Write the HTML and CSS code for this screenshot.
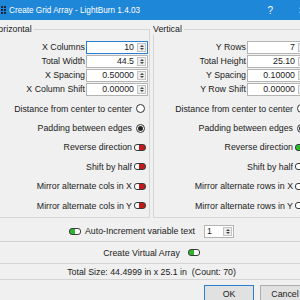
FILE: index.html
```html
<!DOCTYPE html>
<html>
<head>
    <meta charset="UTF-8">
    <title>Create Grid Array - LightBurn 1.4.03</title>
    <link rel="stylesheet" href="styles.css">
</head>
<body>
    <div class="titlebar">
        <svg class="app-icon" width="8" height="8" viewBox="0 0 8 8">
            <rect x="0" y="0" width="2" height="2"/><rect x="3" y="0" width="2" height="2"/><rect x="6" y="0" width="2" height="2"/>
            <rect x="0" y="3" width="2" height="2"/><rect x="3" y="3" width="2" height="2"/><rect x="6" y="3" width="2" height="2"/>
            <rect x="0" y="6" width="2" height="2"/><rect x="3" y="6" width="2" height="2"/><rect x="6" y="6" width="2" height="2"/>
        </svg>
        <span class="title">Create Grid Array - LightBurn 1.4.03</span>
        <span class="tb-btn help">?</span>
        <span class="tb-btn close">✕</span>
    </div>

    <div class="dialog">
        <div class="groups">
            <!-- horizontal settings -->
            <fieldset class="group">
                <legend>Horizontal</legend>
                <div class="field"><label>X Columns</label><div class="spin focused"><span class="val">10</span><span class="arrows"></span></div></div>
                <div class="field"><label>Total Width</label><div class="spin"><span class="val">44.5</span><span class="arrows"></span></div></div>
                <div class="field"><label>X Spacing</label><div class="spin"><span class="val">0.50000</span><span class="arrows"></span></div></div>
                <div class="field"><label>X Column Shift</label><div class="spin"><span class="val">0.00000</span><span class="arrows"></span></div></div>
                <div class="options">
                    <div class="opt"><span>Distance from center to center</span><span class="radio"></span></div>
                    <div class="opt"><span>Padding between edges</span><span class="radio on"></span></div>
                    <div class="opt"><span>Reverse direction</span><span class="toggle"></span></div>
                    <div class="opt"><span>Shift by half</span><span class="toggle"></span></div>
                    <div class="opt"><span>Mirror alternate cols in X</span><span class="toggle"></span></div>
                    <div class="opt"><span>Mirror alternate cols in Y</span><span class="toggle"></span></div>
                </div>
            </fieldset>
            <!-- vertical settings -->
            <fieldset class="group">
                <legend>Vertical</legend>
                <div class="field"><label>Y Rows</label><div class="spin"><span class="val">7</span><span class="arrows"></span></div></div>
                <div class="field"><label>Total Height</label><div class="spin"><span class="val">25.10</span><span class="arrows"></span></div></div>
                <div class="field"><label>Y Spacing</label><div class="spin"><span class="val">0.10000</span><span class="arrows"></span></div></div>
                <div class="field"><label>Y Row Shift</label><div class="spin"><span class="val">0.00000</span><span class="arrows"></span></div></div>
                <div class="options">
                    <div class="opt"><span>Distance from center to center</span><span class="radio"></span></div>
                    <div class="opt"><span>Padding between edges</span><span class="radio on"></span></div>
                    <div class="opt"><span>Reverse direction</span><span class="toggle on"></span></div>
                    <div class="opt"><span>Shift by half</span><span class="toggle"></span></div>
                    <div class="opt"><span>Mirror alternate rows in X</span><span class="toggle"></span></div>
                    <div class="opt"><span>Mirror alternate rows in Y</span><span class="toggle"></span></div>
                </div>
            </fieldset>
        </div>

        <div class="row auto-row">
            <span class="toggle on"></span>
            <span>Auto-Increment variable text</span>
            <div class="spin small"><span class="val left">1</span><span class="arrows"></span></div>
        </div>
        <div class="row virtual-row">
            <span>Create Virtual Array</span>
            <span class="toggle on"></span>
        </div>
        <div class="row total-row">Total Size: 44.4999 in x 25.1 in&nbsp; (Count: 70)</div>
        <div class="buttons">
            <button class="btn default">OK</button>
            <button class="btn">Cancel</button>
        </div>
    </div>
</body>
</html>
```

FILE: styles.css
```css
* {
    box-sizing: border-box;
}
body {
    margin: 0;
    width: 300px;
    height: 300px;
    overflow: hidden;
    background-color: #f0f0f0;
    color: #1a1a1a;
    font-family: "Liberation Sans", Arial, sans-serif;
    font-size: 8.8px;
}

/* window title */
.titlebar {
    height: 20px;
    background-color: #1f87d8;
    color: #ffffff;
    display: flex;
    align-items: center;
    font-size: 8.2px;
}
.app-icon {
    margin-left: -2px;
    fill: #16243f;
}
.title {
    margin-left: 3px;
}
.tb-btn {
    font-size: 10px;
}
.help {
    margin-left: auto;
    margin-right: 25px;
}
.close {
    margin-right: -6px;
}

/* dialog body */
.dialog {
    margin-left: -10px;
    width: 323px;
}
.groups {
    display: flex;
    gap: 3px;
    padding-top: 4px;
    padding-left: 2px;
}
.group {
    width: 158px;
    margin: 0;
    padding: 6px 1px 2px 0;
    border: 1px solid #d6d6d6;
    min-width: 0;
}
.group legend {
    padding: 0 2px 0 0;
    margin-left: -1px;
    line-height: 10px;
}
.field {
    display: flex;
    align-items: center;
    height: 14px;
}
.field label {
    flex: 1;
    text-align: right;
    padding-right: 1px;
}

/* spin boxes */
.spin {
    width: 62px;
    height: 13px;
    display: flex;
    align-items: stretch;
    background-color: #ffffff;
    border: 1px solid #b4b4b4;
}
.spin.focused {
    border-color: #2a7fd0;
}
.spin .val {
    flex: 1;
    text-align: right;
    padding-right: 2px;
    line-height: 11px;
}
.spin .val.left {
    text-align: left;
    padding-left: 2px;
}
.spin.small {
    width: 30px;
    margin-left: 5px;
}
.arrows {
    width: 9px;
    margin: 1px;
    border: 1px solid #c4c4c4;
    background-color: #ececec;
    display: flex;
    flex-direction: column;
    align-items: center;
    justify-content: center;
    gap: 1px;
}
.arrows::before,
.arrows::after {
    content: "";
    border-left: 2px solid transparent;
    border-right: 2px solid transparent;
}
.arrows::before {
    border-bottom: 2px solid #444;
}
.arrows::after {
    border-top: 2px solid #444;
}

/* radio and switch options */
.options {
    margin-top: 3px;
}
.opt {
    height: 19.4px;
    display: flex;
    align-items: center;
    justify-content: flex-end;
    gap: 2px;
    padding-right: 2px;
}
.radio {
    width: 9px;
    height: 9px;
    margin: 0 1px 0 2px;
    border: 1px solid #333333;
    border-radius: 50%;
    background-color: #ffffff;
    display: flex;
    align-items: center;
    justify-content: center;
}
.radio.on::after {
    content: "";
    width: 5px;
    height: 5px;
    border-radius: 50%;
    background-color: #222222;
}
.toggle {
    width: 12px;
    height: 7px;
    border: 1px solid #3a3a3a;
    border-radius: 3px;
    background: linear-gradient(to right, #ffffff 45%, #c21a1a 45%);
}
.toggle.on {
    background: linear-gradient(to right, #2fb52f 55%, #ffffff 55%);
}

/* bottom rows */
.row {
    display: flex;
    align-items: center;
    justify-content: center;
    gap: 4px;
    border-bottom: 1px solid #d4d4d4;
}
.auto-row {
    height: 24px;
    padding-top: 3px;
}
.virtual-row {
    height: 22px;
    gap: 8px;
}
.total-row {
    height: 16px;
}
.buttons {
    display: flex;
    justify-content: flex-end;
    gap: 6px;
    padding: 5px 3px 0 0;
}
.btn {
    width: 50px;
    height: 17px;
    padding: 0;
    font-family: "Liberation Sans", Arial, sans-serif;
    font-size: 8.8px;
    color: #1a1a1a;
    background-color: #e1e1e1;
    border: 1px solid #adadad;
}
.btn.default {
    border-color: #2a7fd0;
}
```
